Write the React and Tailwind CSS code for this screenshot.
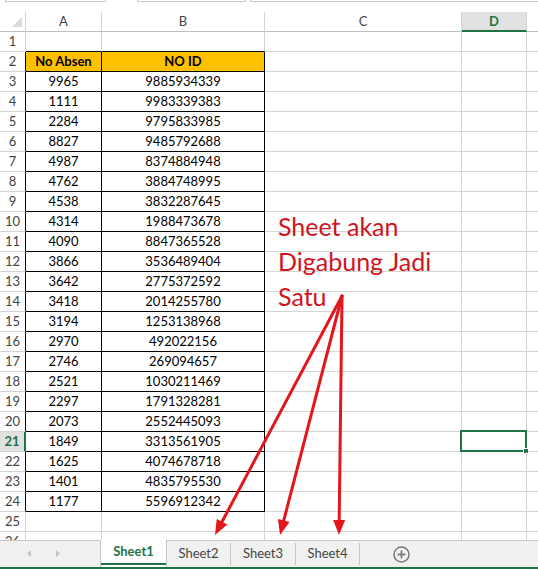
import React from "react";

const DATA = [
  ["9965", "9885934339"],
  ["1111", "9983339383"],
  ["2284", "9795833985"],
  ["8827", "9485792688"],
  ["4987", "8374884948"],
  ["4762", "3884748995"],
  ["4538", "3832287645"],
  ["4314", "1988473678"],
  ["4090", "8847365528"],
  ["3866", "3536489404"],
  ["3642", "2775372592"],
  ["3418", "2014255780"],
  ["3194", "1253138968"],
  ["2970", "492022156"],
  ["2746", "269094657"],
  ["2521", "1030211469"],
  ["2297", "1791328281"],
  ["2073", "2552445093"],
  ["1849", "3313561905"],
  ["1625", "4074678718"],
  ["1401", "4835795530"],
  ["1177", "5596912342"],
];

function Arrow({ x1, y1, x2, y2 }) {
  const dx = x2 - x1;
  const dy = y2 - y1;
  const len = Math.hypot(dx, dy);
  const ux = dx / len;
  const uy = dy / len;
  const hl = 15;
  const hw = 6;
  const bx = x2 - ux * hl;
  const by = y2 - uy * hl;
  const nx = -uy;
  const ny = ux;
  const pts = `${x2},${y2} ${bx + nx * hw},${by + ny * hw} ${bx - nx * hw},${by - ny * hw}`;
  return (
    <g>
      <line x1={x1} y1={y1} x2={bx + ux * 2} y2={by + uy * 2} stroke="#e3161b" strokeWidth="3" strokeLinecap="round" />
      <polygon points={pts} fill="#e3161b" />
    </g>
  );
}

export default function App() {
  const rows = [];
  for (let r = 1; r <= 26; r++) {
    const inTable = r >= 2 && r <= 24;
    const isHead = r === 2;
    const isSel = r === 21;
    const d = r >= 3 && r <= 24 ? DATA[r - 3] : null;

    rows.push(
      <div
        key={`h${r}`}
        className={
          isSel
            ? "h-[20px] border-b border-b-[#d4d4d4] border-r-2 border-r-[#217346] bg-[#e1e1e1] text-center text-[13px] leading-[19px] font-bold text-[#217346]"
            : inTable
            ? "h-[20px] border-b border-b-[#d4d4d4] border-r border-r-black text-center text-[13px] leading-[19px] text-[#444]"
            : "h-[20px] border-b border-r border-[#d4d4d4] text-center text-[13px] leading-[19px] text-[#444]"
        }
      >
        {r}
      </div>
    );

    const abBase = "h-[20px] text-center leading-[19px] text-black";
    const abClass = inTable
      ? `${abBase} border-r border-b border-black ${isHead ? "bg-[#ffc000] font-bold text-[13px]" : "text-[13px]"}`
      : r === 1
      ? `${abBase} border-r border-r-[#d4d4d4] border-b border-b-black`
      : `${abBase} border-r border-b border-[#d4d4d4]`;

    rows.push(
      <div key={`a${r}`} className={abClass}>
        {isHead ? "No Absen" : d ? d[0] : ""}
      </div>
    );
    rows.push(
      <div key={`b${r}`} className={abClass}>
        {isHead ? "NO ID" : d ? d[1] : ""}
      </div>
    );
    rows.push(<div key={`c${r}`} className="h-[20px] border-r border-b border-[#d4d4d4]" />);
    rows.push(
      <div key={`d${r}`} className="relative h-[20px] border-r border-b border-[#d4d4d4]">
        {isSel && (
          <div className="absolute -left-[2px] -top-[2px] -right-px -bottom-px border-2 border-[#217346]">
            <div className="absolute -right-[4px] -bottom-[4px] h-[6px] w-[6px] border border-white bg-[#217346]" />
          </div>
        )}
      </div>
    );
    rows.push(<div key={`e${r}`} className="h-[20px] border-b border-[#d4d4d4]" />);
  }

  return (
    <div className="relative h-[569px] w-[538px] overflow-hidden bg-white font-['Lato','Liberation_Sans',sans-serif]">
      {/* formula bar remnants */}
      <div className="flex h-[12px] items-start">
        <div className="ml-[5px] h-[2px] w-[101px] border-x border-b border-[#c8c8c8]" />
        <div className="ml-[31px] h-[2px] w-[109px] border-x border-b border-[#c8c8c8]" />
        <div className="ml-[4px] h-[2px] flex-1 border-l border-b border-[#c8c8c8]" />
      </div>

      {/* sheet grid */}
      <div className="h-[528px] overflow-hidden">
        <div className="grid grid-cols-[26px_76px_163px_197px_65px_1fr]">
          {/* column headers */}
          <div className="relative h-[20px] border-b border-r border-b-[#bfbfbf] border-r-[#d4d4d4]">
            <svg className="absolute left-0 top-0" width="26" height="20" viewBox="0 0 26 20">
              <polygon points="22,5 22,15 12,15" fill="#dadada" />
            </svg>
          </div>
          <div className="h-[20px] border-b border-r border-b-[#bfbfbf] border-r-[#d4d4d4] text-center text-[13px] leading-[19px] text-[#444]">A</div>
          <div className="h-[20px] border-b border-r border-b-[#bfbfbf] border-r-[#d4d4d4] text-center text-[13px] leading-[19px] text-[#444]">B</div>
          <div className="h-[20px] border-b border-r border-b-[#bfbfbf] border-r-[#d4d4d4] text-center text-[13px] leading-[19px] text-[#444]">C</div>
          <div className="h-[20px] border-b-2 border-r border-b-[#217346] border-r-[#d4d4d4] bg-[#e1e1e1] text-center text-[13px] font-bold leading-[18px] text-[#217346]">D</div>
          <div className="h-[20px] border-b border-b-[#bfbfbf]" />
          {rows}
        </div>
      </div>

      {/* sheet tabs */}
      <div className="flex h-[29px] flex-col border-t border-[#c6c6c6] bg-[#f1f1f1]">
        <div className="flex flex-1 items-stretch">
          <div className="relative w-[100px]">
            <svg className="absolute left-[27px] top-[9px]" width="5" height="8" viewBox="0 0 5 8">
              <polygon points="4,0 4,7 0,3.5" fill="#c4c4c4" />
            </svg>
            <svg className="absolute left-[56px] top-[9px]" width="5" height="8" viewBox="0 0 5 8">
              <polygon points="0,0 0,7 4,3.5" fill="#c4c4c4" />
            </svg>
          </div>
          <div className="-mt-px flex w-[67px] flex-col border-x border-[#c6c6c6] bg-white">
            <div className="flex flex-1 items-center justify-center text-[13px] font-bold text-[#217346]">Sheet1</div>
            <div className="mb-[2px] h-[2px] bg-[#217346]" />
          </div>
          <div className="flex w-[63px] items-center justify-center text-[13px] text-[#444]">Sheet2</div>
          <div className="my-[2px] w-px bg-[#c6c6c6]" />
          <div className="flex w-[64px] items-center justify-center text-[13px] text-[#444]">Sheet3</div>
          <div className="my-[2px] w-px bg-[#c6c6c6]" />
          <div className="flex w-[63px] items-center justify-center text-[13px] text-[#444]">Sheet4</div>
          <div className="my-[2px] w-px bg-[#c6c6c6]" />
          <div className="ml-[33px] flex items-center">
            <svg width="17" height="17" viewBox="0 0 17 17">
              <circle cx="8.5" cy="8.5" r="7.5" fill="none" stroke="#7a7a7a" strokeWidth="1.5" />
              <line x1="4.5" y1="8.5" x2="12.5" y2="8.5" stroke="#7a7a7a" strokeWidth="1.8" />
              <line x1="8.5" y1="4.5" x2="8.5" y2="12.5" stroke="#7a7a7a" strokeWidth="1.8" />
            </svg>
          </div>
        </div>
        <div className="h-[2px] bg-[#217346]" />
      </div>

      {/* annotation text box */}
      <div className="absolute left-[278px] top-[209px] text-[25px] leading-[35px] text-[#d0141c]">
        <div>Sheet akan</div>
        <div>Digabung Jadi</div>
        <div>Satu</div>
      </div>

      {/* arrows */}
      <svg className="pointer-events-none absolute left-0 top-0" width="538" height="569" viewBox="0 0 538 569">
        <Arrow x1={342} y1={296} x2={215} y2={535} />
        <Arrow x1={342} y1={296} x2={280} y2={535} />
        <Arrow x1={342} y1={296} x2={339} y2={535} />
      </svg>
    </div>
  );
}
